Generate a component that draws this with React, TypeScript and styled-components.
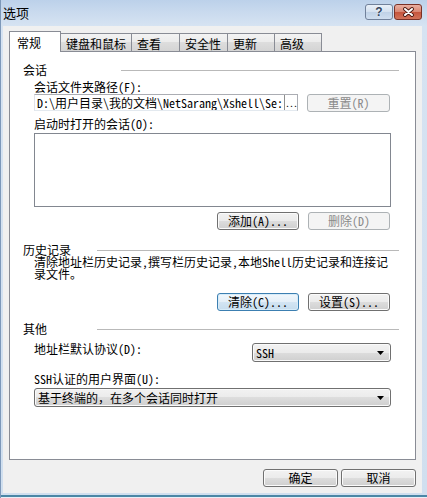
import * as React from 'react'
import styled, { createGlobalStyle, css } from 'styled-components'

const FONT = `"Noto Sans Mono CJK SC", "Noto Sans CJK SC", "DejaVu Sans", sans-serif`

const GlobalStyle = createGlobalStyle`
  html, body { margin: 0; padding: 0; background: #ffffff; }
  body { font-family: ${FONT}; font-size: 12px; color: #000; }
  * { box-sizing: border-box; }
`

const Window = styled.div`
  width: 427px;
  height: 498px;
  display: flex;
  flex-direction: column;
  padding: 0 5px 5px 2px;
  border-left: 1px solid #7d98b9;
  background:
    linear-gradient(to top, #e8eff7 0 1px, #4b87a6 1px 3px, transparent 3px),
    linear-gradient(#bcd1ea, #c9daee 12px, #d6e3f2 26px, #d0dfef);
`

const TitleBar = styled.div`
  height: 26px;
  flex: none;
  display: flex;
  align-items: flex-start;
`

const Title = styled.div`
  flex: 1;
  font-size: 13px;
  line-height: 15px;
  padding-top: 5px;
  color: #000;
`

const CaptionButton = styled.div<{ $variant: 'help' | 'close' }>`
  margin-top: 4px;
  height: 16px;
  border-radius: 3px;
  display: flex;
  align-items: center;
  justify-content: center;
  ${p =>
    p.$variant === 'help'
      ? css`
          width: 28px;
          margin-right: 1px;
          border: 1px solid #71819a;
          background: linear-gradient(#e9f0f8, #d3e0ef 50%, #bfd1e6 50%, #cfdeef);
          color: #34465f;
          font-family: "Liberation Sans", sans-serif;
          font-weight: bold;
          font-size: 12px;
          text-shadow: 0 0 2px #ffffff;
        `
      : css`
          width: 28px;
          border: 1px solid #7a3126;
          background: linear-gradient(#eab0a2, #d98571 50%, #c5533b 50%, #d2735a);
        `}
`

const Client = styled.div`
  flex: 1;
  background: #f0f0f0;
  display: flex;
  flex-direction: column;
  padding: 5px 6px 0 6px;
`

const TabStrip = styled.div`
  height: 21px;
  flex: none;
  display: flex;
  align-items: flex-end;
  margin-bottom: -1px;
  position: relative;
  z-index: 1;
`

const Tab = styled.div<{ $width: number; $active?: boolean }>`
  width: ${p => p.$width}px;
  flex: none;
  border: 1px solid #898c95;
  border-bottom: none;
  line-height: 14px;
  white-space: nowrap;
  ${p =>
    p.$active
      ? css`
          height: 21px;
          padding: 4px 0 0 7px;
          background: #ffffff;
          position: relative;
          z-index: 2;
        `
      : css`
          height: 18px;
          margin: 0 0 1px -1px;
          padding: 3px 0 0 5px;
          background: linear-gradient(#f3f3f3, #ebebeb 50%, #dddddd 50%, #d4d4d4);
        `}
`

const Panel = styled.div`
  height: 409px;
  flex: none;
  border: 1px solid #898c95;
  background: #ffffff;
  padding: 0 16px 0 13px;
  display: flex;
  flex-direction: column;
`

const GroupHeader = styled.div<{ $mt: number; $lineStart: number; $h?: number }>`
  margin-top: ${p => p.$mt}px;
  height: ${p => p.$h ?? 14}px;
  line-height: ${p => p.$h ?? 14}px;
  display: grid;
  grid-template-columns: ${p => p.$lineStart}px 1fr;
  align-items: center;
`

const GroupRule = styled.div`
  height: 1px;
  background: #b9b9b9;
`

const GroupBody = styled.div`
  margin: 0 8px 0 11px;
  display: flex;
  flex-direction: column;
`

const FieldLabel = styled.div<{ $mt?: number }>`
  margin-top: ${p => p.$mt ?? 0}px;
  line-height: 14px;
  white-space: nowrap;
`

const PathRow = styled.div`
  height: 17px;
  display: flex;
  gap: 9px;
`

const PathBox = styled.div`
  width: 264px;
  flex: none;
  display: flex;
  border: 1px solid #abadb3;
  border-left-color: #e2e3ea;
  border-bottom-color: #e3e9ef;
  background: #ffffff;
`

const PathText = styled.div`
  flex: 1;
  padding-left: 2px;
  line-height: 15px;
  white-space: nowrap;
  overflow: hidden;
`

const BrowseDots = styled.div`
  width: 13px;
  flex: none;
  border-left: 1px solid #8e8f8f;
  font-size: 10px;
  line-height: 15px;
  letter-spacing: -1px;
  text-align: center;
`

const ListBox = styled.div`
  margin-top: 2px;
  height: 74px;
  border: 1px solid #828790;
  background: #ffffff;
`

const ButtonRow = styled.div<{ $mt: number; $gap?: number }>`
  margin-top: ${p => p.$mt}px;
  height: 18px;
  display: flex;
  justify-content: flex-end;
  gap: ${p => p.$gap ?? 9}px;
  padding-right: 1px;
`

type ButtonState = 'normal' | 'disabled' | 'focused'

const PushButton = styled.div<{ $width: number; $state?: ButtonState }>`
  width: ${p => p.$width}px;
  height: 18px;
  flex: none;
  border-radius: 3px;
  line-height: 16px;
  text-align: center;
  white-space: nowrap;
  ${p =>
    p.$state === 'disabled'
      ? css`
          border: 1px solid #adb2b5;
          background: #f4f4f4;
          color: #8a8a8a;
        `
      : p.$state === 'focused'
        ? css`
            border: 1px solid #3c7fb1;
            background: linear-gradient(#f1f7fc, #e4eff8 50%, #d3e5f3 50%, #c6dced);
            box-shadow: inset 0 0 0 1px #d7ecf9;
          `
        : css`
            border: 1px solid #707070;
            background: linear-gradient(#f2f2f2, #ebebeb 50%, #dddddd 50%, #cfcfcf);
            box-shadow: inset 0 0 0 1px #fbfbfb;
          `}
`

const Description = styled.div`
  margin: 0 0 0 11px;
  line-height: 12px;
`

const ComboRow = styled.div<{ $mt: number }>`
  margin-top: ${p => p.$mt}px;
  height: 20px;
  display: flex;
  align-items: flex-start;
`

const Combo = styled.div<{ $width?: number; $mt: number }>`
  ${p => (p.$width ? `width: ${p.$width}px; margin-left: auto;` : '')}
  margin-top: ${p => p.$mt}px;
  height: 19px;
  flex: none;
  display: flex;
  align-items: center;
  border: 1px solid #707070;
  border-radius: 3px;
  background: linear-gradient(#f2f2f2, #ebebeb 50%, #dddddd 50%, #cfcfcf);
  box-shadow: inset 0 0 0 1px #fafafa;
  padding: 0 6px 0 3px;
`

const ComboText = styled.div`
  flex: 1;
  line-height: 17px;
  white-space: nowrap;
`

const Footer = styled.div`
  margin-top: 9px;
  height: 18px;
  display: flex;
  justify-content: flex-end;
  gap: 3px;
`

const tabs = [
  { label: '常规', width: 52, active: true },
  { label: '键盘和鼠标', width: 72 },
  { label: '查看', width: 49 },
  { label: '安全性', width: 49 },
  { label: '更新', width: 48 },
  { label: '高级', width: 48 },
]

const DropArrow = () => (
  <svg width="7" height="4" viewBox="0 0 7 4">
    <polygon points="0,0 7,0 3.5,4" fill="#000" />
  </svg>
)

const CloseGlyph = () => (
  <svg width="13" height="10" viewBox="0 0 13 10">
    <path d="M3 2 L10 8 M10 2 L3 8" stroke="#4c1a12" strokeWidth="3.8" strokeLinecap="round" />
    <path d="M3 2 L10 8 M10 2 L3 8" stroke="#ffffff" strokeWidth="2" strokeLinecap="round" />
  </svg>
)

export default function App() {
  return (
    <>
      <GlobalStyle />
      <Window>
        <TitleBar>
          <Title>选项</Title>
          <CaptionButton $variant="help">?</CaptionButton>
          <CaptionButton $variant="close">
            <CloseGlyph />
          </CaptionButton>
        </TitleBar>
        <Client>
          <TabStrip>
            {tabs.map(t => (
              <Tab key={t.label} $width={t.width} $active={t.active}>
                {t.label}
              </Tab>
            ))}
          </TabStrip>
          <Panel>
            <GroupHeader $mt={11} $lineStart={98}>
              <span>会话</span>
              <GroupRule />
            </GroupHeader>
            <GroupBody>
              <FieldLabel $mt={3}>会话文件夹路径(F):</FieldLabel>
              <PathRow>
                <PathBox>
                  <PathText>D:\用户目录\我的文档\NetSarang\Xshell\Se:</PathText>
                  <BrowseDots>...</BrowseDots>
                </PathBox>
                <PushButton $width={83} $state="disabled">重置(R)</PushButton>
              </PathRow>
              <FieldLabel $mt={6}>启动时打开的会话(O):</FieldLabel>
              <ListBox />
              <ButtonRow $mt={5}>
                <PushButton $width={82}>添加(A)...</PushButton>
                <PushButton $width={82} $state="disabled">删除(D)</PushButton>
              </ButtonRow>
            </GroupBody>

            <GroupHeader $mt={14} $lineStart={74} $h={12}>
              <span>历史记录</span>
              <GroupRule />
            </GroupHeader>
            <Description>
              清除地址栏历史记录,撰写栏历史记录,本地Shell历史记录和连接记
              <br />
              录文件。
            </Description>
            <GroupBody>
              <ButtonRow $mt={13}>
                <PushButton $width={82} $state="focused">清除(C)...</PushButton>
                <PushButton $width={82}>设置(S)...</PushButton>
              </ButtonRow>
            </GroupBody>

            <GroupHeader $mt={11} $lineStart={74}>
              <span>其他</span>
              <GroupRule />
            </GroupHeader>
            <GroupBody>
              <ComboRow $mt={6}>
                <FieldLabel>地址栏默认协议(D):</FieldLabel>
                <Combo $width={139} $mt={1}>
                  <ComboText>SSH</ComboText>
                  <DropArrow />
                </Combo>
              </ComboRow>
              <FieldLabel $mt={10}>SSH认证的用户界面(U):</FieldLabel>
              <Combo $mt={2}>
                <ComboText>基于终端的，在多个会话同时打开</ComboText>
                <DropArrow />
              </Combo>
            </GroupBody>
          </Panel>
          <Footer>
            <PushButton $width={75}>确定</PushButton>
            <PushButton $width={75}>取消</PushButton>
          </Footer>
        </Client>
      </Window>
    </>
  )
}
